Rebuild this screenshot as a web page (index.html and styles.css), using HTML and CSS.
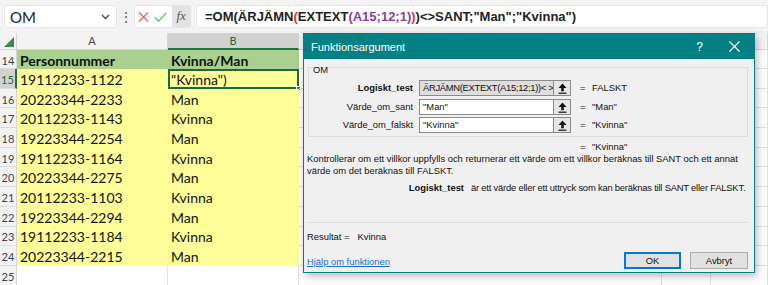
FILE: index.html
```html
<!DOCTYPE html>
<html lang="sv">
<head>
<meta charset="utf-8">
<title>Funktionsargument</title>
<link rel="stylesheet" href="styles.css">
</head>
<body>
<div class="toolbar">
  <div class="namebox"><span>OM</span>
    <svg class="chev" width="9" height="6" viewBox="0 0 9 6"><path d="M1 1 L4.5 4.5 L8 1" fill="none" stroke="#444" stroke-width="1.3"/></svg>
  </div>
  <div class="dots">⋮</div>
  <div class="fxbox">
    <svg class="ic" width="12" height="12" viewBox="0 0 12 12"><path d="M1 1 L11 11 M11 1 L1 11" stroke="#e0524f" stroke-width="1.3" fill="none"/></svg>
    <svg class="ic" width="14" height="12" viewBox="0 0 14 12"><path d="M1 6.5 L5 10.5 L13 1.5" stroke="#5bb75b" stroke-width="1.3" fill="none"/></svg>
    <div class="fx">fx</div>
  </div>
  <div class="formula">=OM(ÄRJÄMN<span class="red">(</span>EXTEXT<span class="pur">(A15;12;1)</span><span class="red">)</span>)&lt;&gt;SANT;"Man";"Kvinna")</div>
</div>

<div class="sheet">
  <div class="corner"><span class="tri"></span></div>
  <div class="colh">A</div>
  <div class="colh sel">B</div>
  <div class="colh"></div>
  <div class="colh"></div>
  <div class="colh"></div>

  <div class="rowh">14</div>
  <div class="cell head">Personnummer</div>
  <div class="cell head">Kvinna/Man</div>
  <div class="cell"></div><div class="cell"></div><div class="cell"></div>

  <div class="rowh sel">15</div>
  <div class="cell y">19112233-1122</div>
  <div class="cell y active">"Kvinna")<span class="handle"></span></div>
  <div class="cell"></div><div class="cell"></div><div class="cell"></div>

  <div class="rowh">16</div>
  <div class="cell y">20223344-2233</div>
  <div class="cell y">Man</div>
  <div class="cell"></div><div class="cell"></div><div class="cell"></div>

  <div class="rowh">17</div>
  <div class="cell y">20112233-1143</div>
  <div class="cell y">Kvinna</div>
  <div class="cell"></div><div class="cell"></div><div class="cell"></div>

  <div class="rowh">18</div>
  <div class="cell y">19223344-2254</div>
  <div class="cell y">Man</div>
  <div class="cell"></div><div class="cell"></div><div class="cell"></div>

  <div class="rowh">19</div>
  <div class="cell y">19112233-1164</div>
  <div class="cell y">Kvinna</div>
  <div class="cell"></div><div class="cell"></div><div class="cell"></div>

  <div class="rowh">20</div>
  <div class="cell y">20223344-2275</div>
  <div class="cell y">Man</div>
  <div class="cell"></div><div class="cell"></div><div class="cell"></div>

  <div class="rowh">21</div>
  <div class="cell y">20112233-1103</div>
  <div class="cell y">Kvinna</div>
  <div class="cell"></div><div class="cell"></div><div class="cell"></div>

  <div class="rowh">22</div>
  <div class="cell y">19223344-2294</div>
  <div class="cell y">Man</div>
  <div class="cell"></div><div class="cell"></div><div class="cell"></div>

  <div class="rowh">23</div>
  <div class="cell y">19112233-1184</div>
  <div class="cell y">Kvinna</div>
  <div class="cell"></div><div class="cell"></div><div class="cell"></div>

  <div class="rowh">24</div>
  <div class="cell y">20223344-2215</div>
  <div class="cell y">Man</div>
  <div class="cell"></div><div class="cell"></div><div class="cell"></div>

  <div class="rowh">25</div>
  <div class="cell"></div>
  <div class="cell"></div>
  <div class="cell"></div><div class="cell"></div><div class="cell"></div>
</div>

<div class="dialog">
  <div class="titlebar">
    <span class="title">Funktionsargument</span>
    <span class="tb-help">?</span>
    <svg class="tb-close" width="11" height="11" viewBox="0 0 11 11"><path d="M0.5 0.5 L10.5 10.5 M10.5 0.5 L0.5 10.5" stroke="#fff" stroke-width="1.1" fill="none"/></svg>
  </div>
  <div class="dbody">
    <div class="group">
      <div class="legend">OM</div>
      <div class="args">
        <div class="alabel b">Logiskt_test</div>
        <div class="ainput grey">ÄRJÄMN(EXTEXT(A15;12;1))&lt; &gt; SA</div>
        <div class="abtn"><svg width="9" height="11" viewBox="0 0 9 11"><path d="M4.5 0.5 L8.5 5 L5.8 5 L5.8 8.3 L3.2 8.3 L3.2 5 L0.5 5 Z" fill="#111"/><rect x="0.5" y="9.6" width="8" height="1.2" fill="#111"/></svg></div>
        <div class="aval"><span class="eq">=</span>FALSKT</div>

        <div class="alabel">Värde_om_sant</div>
        <div class="ainput">"Man"</div>
        <div class="abtn"><svg width="9" height="11" viewBox="0 0 9 11"><path d="M4.5 0.5 L8.5 5 L5.8 5 L5.8 8.3 L3.2 8.3 L3.2 5 L0.5 5 Z" fill="#111"/><rect x="0.5" y="9.6" width="8" height="1.2" fill="#111"/></svg></div>
        <div class="aval"><span class="eq">=</span>"Man"</div>

        <div class="alabel">Värde_om_falskt</div>
        <div class="ainput">"Kvinna"</div>
        <div class="abtn"><svg width="9" height="11" viewBox="0 0 9 11"><path d="M4.5 0.5 L8.5 5 L5.8 5 L5.8 8.3 L3.2 8.3 L3.2 5 L0.5 5 Z" fill="#111"/><rect x="0.5" y="9.6" width="8" height="1.2" fill="#111"/></svg></div>
        <div class="aval"><span class="eq">=</span>"Kvinna"</div>
      </div>
    </div>
    <div class="result-line"><span class="eq">=</span>"Kvinna"</div>
    <p class="desc">Kontrollerar om ett villkor uppfylls och returnerar ett värde om ett villkor beräknas till SANT och ett annat värde om det beräknas till FALSKT.</p>
    <div class="pdesc"><span class="pname">Logiskt_test</span><span class="ptext">är ett värde eller ett uttryck som kan beräknas till SANT eller FALSKT.</span></div>
    <div class="sep"></div>
    <div class="resultat"><span>Resultat =</span><span class="rv">Kvinna</span></div>
    <div class="footer">
      <a class="help" href="#">Hjälp om funktionen</a>
      <div class="btns">
        <button class="btn ok">OK</button>
        <button class="btn">Avbryt</button>
      </div>
    </div>
  </div>
</div>
</body>
</html>
```

FILE: styles.css
```css
* { box-sizing: border-box; }
html, body { margin: 0; padding: 0; }
body {
  width: 768px;
  height: 285px;
  overflow: hidden;
  position: relative;
  background: #ffffff;
  font-family: Lato, "Liberation Sans", sans-serif;
  color: #1a1a1a;
}

/* ---------- toolbar ---------- */
.toolbar {
  height: 33px;
  background: #f3f3f3;
  display: flex;
  align-items: flex-start;
  padding-top: 5px;
}
.namebox {
  margin-left: 4px;
  width: 113px;
  height: 23px;
  background: #fff;
  border: 1px solid #e6e6e6;
  border-radius: 3px;
  display: flex;
  align-items: center;
  justify-content: space-between;
  padding: 0 6px 0 5px;
  font-size: 15px;
  color: #222;
}
.dots {
  width: 17px;
  text-align: center;
  color: #666;
  font-size: 14px;
  line-height: 23px;
}
.fxbox {
  width: 57px;
  height: 23px;
  background: #fff;
  border: 1px solid #e6e6e6;
  border-radius: 3px;
  display: flex;
  align-items: center;
  padding-left: 3px;
  gap: 5px;
}
.fx {
  margin-left: auto;
  width: 19px;
  height: 21px;
  background: #e3e3e3;
  font-family: "Liberation Serif", serif;
  font-style: italic;
  font-size: 13px;
  color: #555;
  text-align: center;
  line-height: 20px;
}
.formula {
  margin-left: 5px;
  flex: 1;
  height: 23px;
  background: #fff;
  border: 1px solid #e6e6e6;
  border-radius: 3px 0 0 3px;
  padding-left: 8px;
  font-family: "Liberation Sans", sans-serif;
  font-weight: bold;
  font-size: 13px;
  line-height: 21px;
  color: #222;
  white-space: nowrap;
  overflow: hidden;
}
.red { color: #e2331c; }
.pur { color: #8c3aa8; }

/* ---------- sheet ---------- */
.sheet {
  display: grid;
  grid-template-columns: 17px 151px 131px 363px 49px 57px;
  grid-template-rows: 17px 19px repeat(10, 19.7px) 20px;
}
.corner {
  background: #f3f3f3;
  border-right: 1px solid #d6d6d6;
  border-bottom: 1px solid #d6d6d6;
  position: relative;
}
.tri {
  position: absolute;
  right: 2px;
  bottom: 2px;
  width: 0; height: 0;
  border-left: 10px solid transparent;
  border-bottom: 10px solid #3f8a4a;
}
.colh {
  background: #f3f3f3;
  border-right: 1px solid #d6d6d6;
  border-bottom: 1px solid #d6d6d6;
  font-size: 11px;
  color: #444;
  text-align: center;
  line-height: 16px;
}
.colh.sel {
  background: #d2d2d2;
  color: #1e6b3a;
  border-bottom: 2px solid #217346;
}
.rowh {
  background: #f3f3f3;
  border-right: 1px solid #d6d6d6;
  border-bottom: 1px solid #dcdcdc;
  font-size: 11px;
  color: #444;
  display: flex;
  align-items: center;
  justify-content: center;
  padding-top: 2px;
}
.rowh.sel {
  background: #d2d2d2;
  color: #1e6b3a;
  border-right: 2px solid #217346;
}
.cell {
  border-right: 1px solid #e1e1e1;
  border-bottom: 1px solid #e1e1e1;
  font-size: 14px;
  color: #111;
  padding-left: 3px;
  display: flex;
  align-items: center;
  padding-top: 2px;
  white-space: nowrap;
  position: relative;
}
.cell.head {
  background: #a9d08e;
  border-color: #a9d08e;
  font-weight: bold;
}
.cell.y {
  background: #ffff99;
  border-color: #ffff99;
}
.cell.active {
  border: 2px solid #1e6b3a;
  padding-left: 1px;
}
.handle {
  position: absolute;
  right: -4px;
  bottom: -4px;
  width: 5px;
  height: 5px;
  background: #1e6b3a;
  border: 1px solid #fff;
}

/* ---------- dialog ---------- */
.dialog {
  position: absolute;
  left: 303px;
  top: 33px;
  width: 452px;
  height: 240px;
  background: #f0f0f0;
  border: 1px solid #0a7d81;
  box-shadow: 2px 3px 8px rgba(0,0,0,0.28);
  font-family: "Liberation Sans", sans-serif;
  font-size: 9.4px;
  color: #111;
}
.titlebar {
  height: 25px;
  background: #047f83;
  color: #fff;
  display: flex;
  align-items: center;
  padding-left: 7px;
  padding-right: 14px;
}
.title { font-size: 11px; flex: 1; }
.tb-help { font-size: 12px; margin-right: 26px; }
.dbody {
  padding: 8px 6px 0 3px;
}
.group {
  margin-left: 1px;
  border: 1px solid #dcdcdc;
  height: 70px;
  padding: 0;
}
.legend {
  line-height: 10px;
  margin-top: -3px;
  padding-left: 4px;
}
.args {
  display: grid;
  grid-template-columns: 110px 134px 18px 1fr;
  grid-template-rows: 19px 18px 18px;
  margin-top: 5px;
}
.alabel {
  text-align: right;
  padding-right: 6px;
  line-height: 16px;
  height: 16px;
}
.alabel.b { font-weight: bold; }
.ainput {
  height: 16px;
  background: #fff;
  border: 1px solid #8a8a8a;
  border-right: none;
  padding-left: 3px;
  line-height: 14px;
  white-space: nowrap;
  overflow: hidden;
}
.ainput.grey { background: #dedede; letter-spacing: -0.3px; }
.abtn {
  height: 16px;
  background: #e6e6e6;
  border: 1px solid #8a8a8a;
  display: flex;
  align-items: center;
  justify-content: center;
}
.aval {
  padding-left: 9px;
  line-height: 16px;
}
.eq { display: inline-block; width: 12px; }
.result-line {
  margin-left: 273px;
  margin-top: 4px;
  line-height: 12px;
}
.desc {
  margin: 0;
  line-height: 12px;
  width: 440px;
}
.pdesc {
  margin-top: 5px;
  line-height: 12px;
  display: flex;
  white-space: nowrap;
}
.pname {
  width: 164px;
  text-align: right;
  font-weight: bold;
  padding-right: 7px;
}
.ptext { letter-spacing: -0.2px; }
.sep {
  margin-top: 28px;
  height: 1px;
  background: #dcdcdc;
}
.resultat {
  margin-top: 8px;
  line-height: 12px;
  display: flex;
}
.rv { margin-left: 8px; }
.footer {
  margin-top: 9px;
  display: flex;
  align-items: center;
  justify-content: space-between;
}
.help {
  color: #1c6fd0;
  text-decoration: underline;
  margin-top: 2px;
}
.btns { display: flex; gap: 9px; }
.btn {
  width: 58px;
  height: 17px;
  background: #e1e1e1;
  border: 1px solid #adadad;
  font-family: "Liberation Sans", sans-serif;
  font-size: 9.4px;
  color: #111;
  padding: 0;
}
.btn.ok { width: 57px; border: 2px solid #0078d7; }
```
